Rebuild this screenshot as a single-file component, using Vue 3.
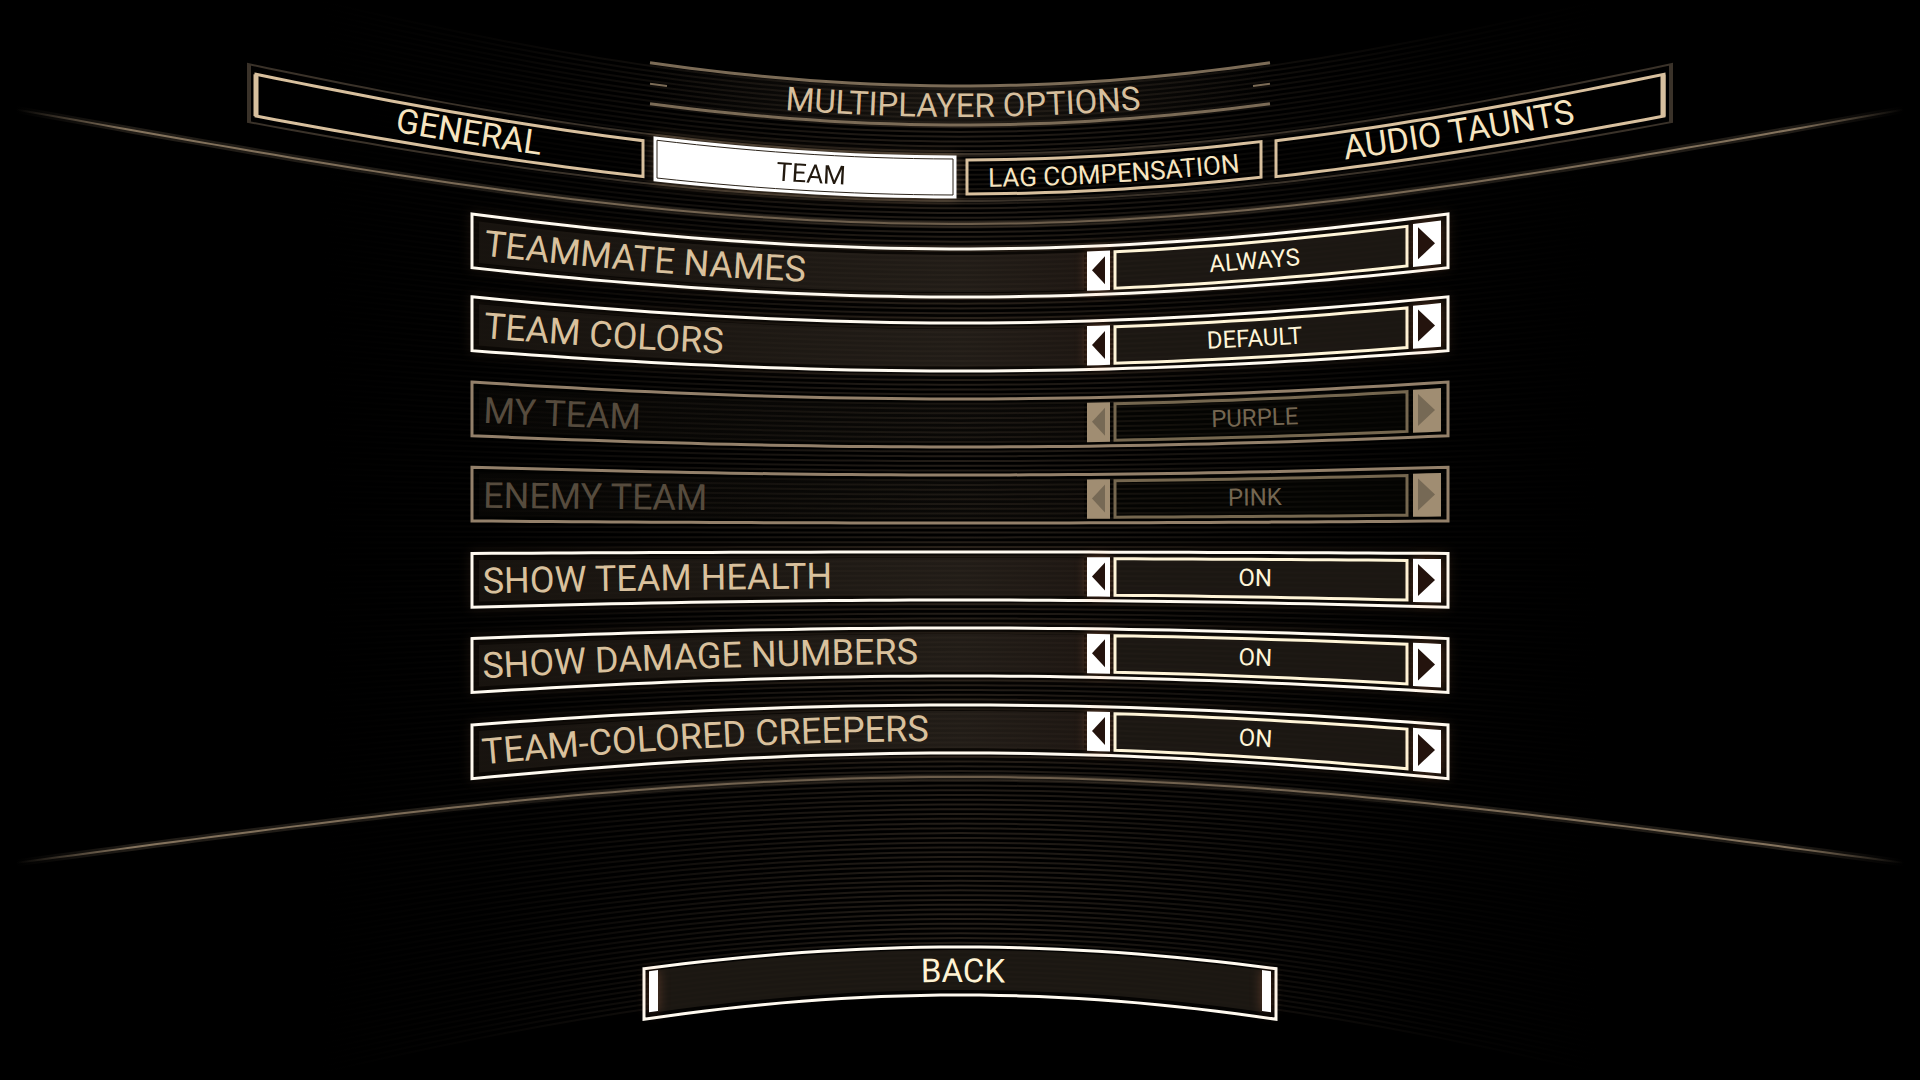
<script setup>
import { ref, reactive } from 'vue'

/* The menu is drawn on the inside of a cylinder: the further a point is
   from the middle of the screen, the more it is pushed away from the horizon. */
const CENTER_X = 960
const HORIZON = 540
const stretch = (x) => {
  const u2 = (x - CENTER_X) ** 2
  return 1 + u2 / (1800000 + 0.74 * u2)
}
const bend = (x, v) => (HORIZON + (v - HORIZON) * stretch(x)).toFixed(2)

const points = (x0, x1, v) => {
  const steps = Math.max(1, Math.ceil((x1 - x0) / 20))
  return Array.from({ length: steps + 1 }, (_, i) => {
    const x = x0 + ((x1 - x0) * i) / steps
    return `${x.toFixed(2)} ${bend(x, v)}`
  })
}
const arc = (x0, x1, v) => `M${points(x0, x1, v).join('L')}`
const panel = (x0, x1, v0, v1) =>
  `M${points(x0, x1, v0).join('L')}L${points(x0, x1, v1).reverse().join('L')}Z`

const scanlines = Array.from({ length: 189 }, (_, i) => arc(320, 1600, 89 + i * 4.77)).join('')

const tabs = [
  { id: 'general', label: 'GENERAL', box: '245 60 403 150', x0: 256, x1: 643, v0: 161, v1: 195, mid: 468, large: true, edge: 256 },
  { id: 'team', label: 'TEAM', box: '648 60 313 150', x0: 655, x1: 955, v0: 157, v1: 197, mid: 811 },
  { id: 'lag', label: 'LAG COMPENSATION', box: '961 60 307 150', x0: 967, x1: 1261, v0: 160, v1: 194, mid: 1114 },
  { id: 'audio', label: 'AUDIO TAUNTS', box: '1268 60 407 150', x0: 1276, x1: 1664, v0: 161, v1: 195, mid: 1460, large: true, edge: 1663 },
]
const activeTab = ref('team')

const onOff = ['ON', 'OFF']
const colors = ['PURPLE', 'PINK', 'BLUE', 'GREEN']
const options = reactive([
  { id: 'names', label: 'TEAMMATE NAMES', choices: ['ALWAYS', 'NEVER'], pick: 0, top: 210, height: 85, v: 249 },
  { id: 'colors', label: 'TEAM COLORS', choices: ['DEFAULT', 'CUSTOM'], pick: 0, top: 295, height: 85, v: 323 },
  { id: 'mine', label: 'MY TEAM', choices: colors, pick: 0, top: 380, height: 80, v: 399, disabled: true },
  { id: 'enemy', label: 'ENEMY TEAM', choices: colors, pick: 1, top: 460, height: 80, v: 475, disabled: true },
  { id: 'health', label: 'SHOW TEAM HEALTH', choices: onOff, pick: 0, top: 540, height: 80, v: 552 },
  { id: 'damage', label: 'SHOW DAMAGE NUMBERS', choices: onOff, pick: 0, top: 620, height: 80, v: 628 },
  { id: 'creepers', label: 'TEAM-COLORED CREEPERS', choices: onOff, pick: 0, top: 700, height: 80, v: 705 },
])
const step = (option, by) => {
  const count = option.choices.length
  option.pick = (option.pick + by + count) % count
}
const slice = (option, x, width) => `${x} ${option.top} ${width} ${option.height}`
const pointer = (option, tip, base, half) => {
  const y = Number(bend((tip + base) / 2, option.v + 24))
  return `M${tip} ${y}L${base} ${y - half}V${y + half}Z`
}
</script>

<template>
  <main class="stage">
    <svg class="backdrop" viewBox="0 0 1920 1080" aria-hidden="true">
      <defs>
        <linearGradient id="scan-fade" gradientUnits="userSpaceOnUse" x1="320" y1="0" x2="1600" y2="0">
          <stop offset="0" stop-color="#241e18" stop-opacity="0" />
          <stop offset="0.12" stop-color="#241e18" stop-opacity="0.12" />
          <stop offset="0.28" stop-color="#241e18" stop-opacity="0.5" />
          <stop offset="0.5" stop-color="#241e18" />
          <stop offset="0.72" stop-color="#241e18" stop-opacity="0.5" />
          <stop offset="0.88" stop-color="#241e18" stop-opacity="0.12" />
          <stop offset="1" stop-color="#241e18" stop-opacity="0" />
        </linearGradient>
        <linearGradient id="rail-fade" gradientUnits="userSpaceOnUse" x1="16" y1="0" x2="1904" y2="0">
          <stop offset="0" stop-color="#7d6c57" stop-opacity="0" />
          <stop offset="0.06" stop-color="#84735d" />
          <stop offset="0.5" stop-color="#6b5c4a" />
          <stop offset="0.94" stop-color="#84735d" />
          <stop offset="1" stop-color="#7d6c57" stop-opacity="0" />
        </linearGradient>
        <linearGradient id="label-fill" gradientUnits="userSpaceOnUse" x1="479" y1="0" x2="1084" y2="0">
          <stop offset="0" stop-color="#1c1712" />
          <stop offset="0.8" stop-color="#29231d" />
          <stop offset="1" stop-color="#241c17" />
        </linearGradient>
        <linearGradient id="title-fill" gradientUnits="userSpaceOnUse" x1="650" y1="0" x2="1270" y2="0">
          <stop offset="0" stop-color="#221d17" stop-opacity="0" />
          <stop offset="0.5" stop-color="#221d17" />
          <stop offset="1" stop-color="#221d17" stop-opacity="0" />
        </linearGradient>
      </defs>
      <path class="scanlines" :d="scanlines" />
      <g v-for="v in [224, 777]" :key="v">
        <path class="rail-glow" :d="arc(16, 1904, v)" />
        <path class="rail" :d="arc(16, 1904, v)" />
      </g>
      <path class="nav-frame" :d="panel(248, 1672, 154, 201)" />
      <path class="nav-edge" :d="`M249 ${bend(249, 154)}V${bend(249, 201)}M1671 ${bend(1671, 154)}V${bend(1671, 201)}`" />
    </svg>

    <header class="top">
      <h1 class="title">
        <svg class="slice" viewBox="648 60 620 150">
          <path class="title-fill" :d="panel(650, 1270, 87, 125)" />
          <path class="title-line" :d="arc(650, 1270, 86)" />
          <path class="title-line" :d="arc(650, 1270, 125)" />
          <path class="title-tick" :d="arc(650, 667, 106) + arc(1253, 1270, 106)" />
          <path id="title-base" class="guide" :d="arc(713, 1213, 117)" />
          <text class="title-text"><textPath href="#title-base" startOffset="50%">MULTIPLAYER OPTIONS</textPath></text>
        </svg>
      </h1>
      <button
        v-for="tab in tabs"
        :key="tab.id"
        type="button"
        class="tab"
        :class="[tab.id, { active: activeTab === tab.id }]"
        :aria-pressed="activeTab === tab.id"
        @click="activeTab = tab.id"
      >
        <svg class="slice" :viewBox="tab.box">
          <path class="tab-frame" :d="panel(tab.x0, tab.x1, tab.v0, tab.v1)" />
          <path
            v-if="activeTab === tab.id"
            class="tab-inner"
            :d="panel(tab.x0 + 2, tab.x1 - 2, tab.v0 + 2, tab.v1 - 2)"
          />
          <path v-if="tab.edge" class="tab-edge" :d="`M${tab.edge} ${bend(tab.edge, 161)}V${bend(tab.edge, 195)}`" />
          <path :id="`${tab.id}-base`" class="guide" :d="arc(tab.mid - 200, tab.mid + 200, 187)" />
          <text class="tab-text" :class="{ large: tab.large }">
            <textPath :href="`#${tab.id}-base`" startOffset="50%">{{ tab.label }}</textPath>
          </text>
        </svg>
      </button>
    </header>

    <section class="options" aria-label="Team">
      <div
        v-for="option in options"
        :key="option.id"
        class="option"
        :class="{ off: option.disabled }"
        :style="{ flexGrow: option.height }"
        role="group"
        :aria-labelledby="`${option.id}-label`"
      >
        <svg class="frame" :viewBox="slice(option, 470, 980)" aria-hidden="true">
          <path class="frame-line" :d="panel(472, 1448, option.v, option.v + 48)" />
        </svg>
        <span :id="`${option.id}-label`" class="cell">
          <svg class="slice" :viewBox="slice(option, 470, 614)">
            <path class="label-fill" :d="panel(479, 1084, option.v + 6, option.v + 43)" />
            <path :id="`${option.id}-label-base`" class="guide" :d="arc(483, 1084, option.v + 36)" />
            <text class="label-text"><textPath :href="`#${option.id}-label-base`">{{ option.label }}</textPath></text>
          </svg>
        </span>
        <button type="button" class="cell" aria-label="Previous" :disabled="option.disabled" @click="step(option, -1)">
          <svg class="slice" :viewBox="slice(option, 1084, 28)">
            <path class="key" :d="panel(1087, 1110, option.v + 5, option.v + 44)" />
            <path class="key-arrow" :d="pointer(option, 1092, 1105, 14)" />
          </svg>
        </button>
        <output class="cell">
          <svg class="slice" :viewBox="slice(option, 1112, 299)">
            <path class="value-box" :d="panel(1115, 1407, option.v + 6.5, option.v + 42.5)" />
            <path :id="`${option.id}-value-base`" class="guide" :d="arc(1135, 1375, option.v + 32)" />
            <text class="value-text">
              <textPath :href="`#${option.id}-value-base`" startOffset="50%">{{ option.choices[option.pick] }}</textPath>
            </text>
          </svg>
        </output>
        <button type="button" class="cell" aria-label="Next" :disabled="option.disabled" @click="step(option, 1)">
          <svg class="slice" :viewBox="slice(option, 1411, 39)">
            <path class="key" :d="panel(1413, 1441, option.v + 5, option.v + 44)" />
            <path class="key-arrow" :d="pointer(option, 1435, 1418, 16)" />
          </svg>
        </button>
      </div>
    </section>

    <footer class="bottom">
      <button type="button" class="back">
        <svg class="slice" viewBox="640 940 640 85">
          <path class="back-frame" :d="panel(644, 1276, 947, 995)" />
          <path class="back-fill" :d="panel(658, 1262, 950, 990)" />
          <path class="key" :d="panel(649, 658, 950, 989)" />
          <path class="key" :d="panel(1262, 1271, 950, 989)" />
          <path id="back-base" class="guide" :d="arc(863, 1063, 982)" />
          <text class="back-text"><textPath href="#back-base" startOffset="50%">BACK</textPath></text>
        </svg>
      </button>
    </footer>
  </main>
</template>

<style>
html,
body {
  margin: 0;
  background: #000;
}
</style>

<style scoped>
.stage {
  position: relative;
  display: grid;
  grid-template-rows: 60fr minmax(0, 150fr) minmax(0, 570fr) 160fr minmax(0, 85fr) 55fr;
  width: 100%;
  aspect-ratio: 16 / 9;
  overflow: hidden;
  background: #000;
  font-family: Roboto, "Liberation Sans", sans-serif;
}
.backdrop,
.frame {
  position: absolute;
  inset: 0;
  width: 100%;
  height: 100%;
  overflow: visible;
  pointer-events: none;
}
.slice {
  display: block;
  width: 100%;
  height: 100%;
  overflow: visible;
}
path {
  fill: none;
}
.scanlines {
  stroke: url(#scan-fade);
  stroke-width: 2;
}
.rail {
  stroke: url(#rail-fade);
  stroke-width: 2;
}
.rail-glow {
  stroke: url(#rail-fade);
  stroke-width: 7;
  opacity: 0.25;
}
.nav-frame {
  stroke: #3a3229;
  stroke-width: 2;
}
.nav-edge {
  stroke: #3a3229;
  stroke-width: 4;
}

.top {
  position: relative;
  grid-row: 2;
  display: grid;
  grid-template-columns: 245fr 403fr 313fr 307fr 407fr 245fr;
  grid-template-rows: minmax(0, 1fr);
}
.title {
  grid-row: 1;
  grid-column: 3 / 5;
  margin: 0;
  min-width: 0;
  pointer-events: none;
}
.title-fill {
  fill: url(#title-fill);
  fill-opacity: 0.7;
}
.title-line,
.title-tick {
  stroke: #7b6b56;
  stroke-width: 3;
}
.title-tick {
  stroke-width: 2;
}
text {
  font-size: 26px;
  font-weight: 400;
  text-anchor: middle;
}
.title-text {
  font-size: 33px;
  fill: #d6bf9d;
}

button {
  display: block;
  min-width: 0;
  margin: 0;
  padding: 0;
  border: 0;
  background: none;
  font: inherit;
  cursor: pointer;
}
button:disabled {
  cursor: default;
}
.tab {
  grid-row: 1;
}
.general {
  grid-column: 2;
}
.team {
  grid-column: 3;
}
.lag {
  grid-column: 4;
}
.audio {
  grid-column: 5;
}
.tab-frame {
  fill: #000;
  fill-opacity: 0.4;
  stroke: #d8c09e;
  stroke-width: 3;
}
.tab-edge {
  stroke: #d8c09e;
  stroke-width: 5;
}
.tab-text {
  fill: #f7e5c0;
}
.tab-text.large {
  font-size: 34px;
}
.active .tab-frame {
  fill: #fff;
  fill-opacity: 1;
  stroke: #fff;
}
.active .tab-inner {
  stroke: #2c241b;
  stroke-width: 1;
}
.active .tab-text {
  fill: #22190f;
}
.active .slice {
  filter: drop-shadow(0 0 6px rgb(255 200 140 / 25%));
}

.options {
  position: relative;
  grid-row: 3;
  display: flex;
  flex-direction: column;
  min-height: 0;
}
.option {
  position: relative;
  display: grid;
  grid-template-columns: 470fr 614fr 28fr 299fr 39fr 470fr;
  grid-template-rows: minmax(0, 1fr);
  flex-basis: 0;
  min-height: 0;
}
.option .frame {
  grid-column: 2 / 6;
}
.cell {
  position: relative;
  display: block;
  min-width: 0;
}
.option > span {
  grid-column: 2;
}
.frame-line {
  fill: #060504;
  fill-opacity: 0.3;
  stroke: #fffaf0;
  stroke-width: 3;
}
.frame {
  filter: drop-shadow(0 0 6px rgb(255 180 120 / 15%));
}
.label-fill {
  fill: url(#label-fill);
  fill-opacity: 0.75;
}
.label-text {
  font-size: 36px;
  text-anchor: start;
  fill: #d9c19d;
}
.key {
  fill: #fff;
  filter: drop-shadow(0 0 6px rgb(255 150 100 / 30%));
}
.key-arrow {
  fill: #24130d;
}
.value-box {
  fill: #201b16;
  fill-opacity: 0.8;
  stroke: #fff5d8;
  stroke-width: 3;
}
.value-text {
  font-size: 24px;
  fill: #fff5d8;
}
.off .frame,
.off .key {
  filter: none;
}
.off .frame-line {
  stroke: #93806a;
}
.off .label-fill {
  fill-opacity: 0.2;
}
.off .label-text {
  fill: #564b3d;
}
.off .key {
  fill: #a08d72;
}
.off .key-arrow {
  fill: #766955;
}
.off .value-box {
  fill-opacity: 0.1;
  stroke: #75674f;
}
.off .value-text {
  fill: #746651;
}

.bottom {
  position: relative;
  grid-row: 5;
  display: grid;
  grid-template-columns: 640fr 640fr 640fr;
  grid-template-rows: minmax(0, 1fr);
}
.back {
  grid-column: 2;
}
.back-frame {
  fill: #060504;
  fill-opacity: 0.6;
  stroke: #fffaf0;
  stroke-width: 3;
}
.back-fill {
  fill: #221d17;
  fill-opacity: 0.8;
}
.back-text {
  font-size: 33px;
  fill: #fff3d4;
}
</style>
